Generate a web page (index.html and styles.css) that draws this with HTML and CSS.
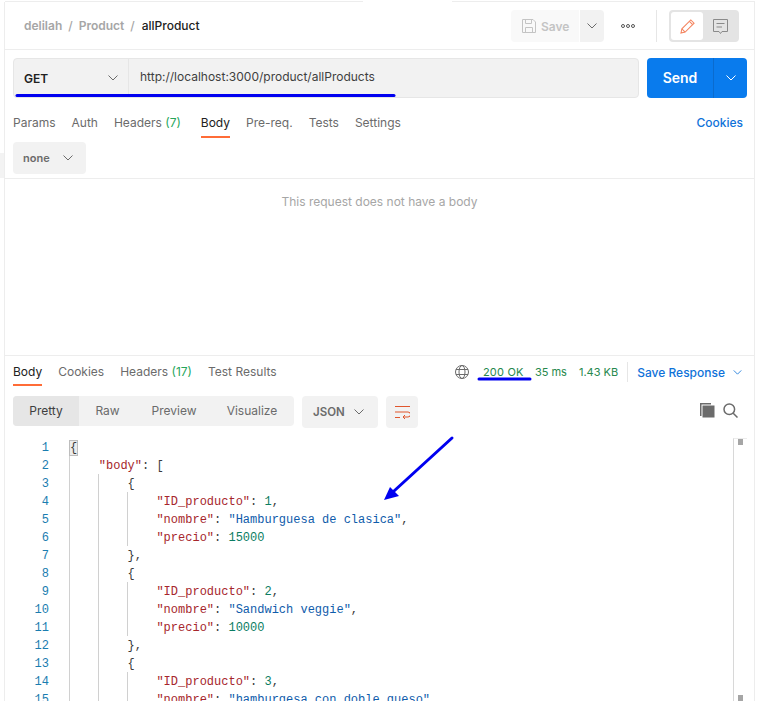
FILE: index.html
```html
<!DOCTYPE html>
<html lang="en">
<head>
<meta charset="utf-8">
<title>allProduct</title>
<link rel="stylesheet" href="styles.css">
</head>
<body>
<div class="stage">
  <div class="topline"><i class="tl-a"></i><i class="tl-b"></i></div>
  <div class="sidepatch"></div>
  <main class="app">
    <header class="head">
      <nav class="crumbs"><span class="dim">delilah</span><span class="sep">/</span><span class="dim">Product</span><span class="sep">/</span><span class="cur">allProduct</span></nav>
      <div class="actions">
        <div class="savegroup">
          <button class="save">
            <svg width="14" height="14" viewBox="0 0 14 14" fill="none" stroke="#c4c4c4" stroke-width="1"><path d="M.5.5h10.500l2.500 2.500v10.500H.5z"/><path d="M3.500.5v4h6v-4M3.500 13.500v-5h7v5"/></svg>
            Save
          </button>
          <button class="savecaret"><svg class="chev" width="10" height="6" viewBox="0 0 10 6"><path d="M.5.5 5 5 9.500.5"/></svg></button>
        </div>
        <div class="dots"><i></i><i></i><i></i></div>
        <div class="vsep"></div>
        <div class="modes">
          <span class="mode on"><svg width="15" height="15" viewBox="0 0 16 16" fill="none" stroke="#f4845f" stroke-width="1.100"><path d="M1 15l1-4.500L11.500 1 15 4.500 5.500 14z"/><path d="M2 10.500 5.500 14M10 2.500 13.500 6"/></svg></span>
          <span class="mode"><svg width="15" height="15" viewBox="0 0 15 15" fill="none" stroke="#8a8a8a" stroke-width="1"><path d="M.5.5h14v12H9l-1.500 2-1.500-2H.5z"/><path d="M3.500 4.500h8M3.500 8h5.500"/></svg></span>
        </div>
      </div>
    </header>

    <section class="reqbar">
      <div class="url">
        <div class="method"><span>GET</span><svg class="chev" width="10" height="6" viewBox="0 0 10 6"><path d="M.5.5 5 5 9.500.5"/></svg></div>
        <div class="address">http://localhost:3000/product/allProducts</div>
      </div>
      <div class="send">
        <span class="sendlabel">Send</span>
        <span class="sendcaret"><svg class="chev white" width="10" height="6" viewBox="0 0 10 6"><path d="M.5.5 5 5 9.500.5"/></svg></span>
      </div>
    </section>

    <nav class="tabs reqtabs">
      <span class="tab">Params</span>
      <span class="tab">Auth</span>
      <span class="tab hdr">Headers <em>(7)</em></span>
      <span class="tab active">Body</span>
      <span class="tab">Pre-req.</span>
      <span class="tab">Tests</span>
      <span class="tab">Settings</span>
      <a class="cookies">Cookies</a>
    </nav>

    <div class="bodytype">
      <div class="drop none"><span>none</span><svg class="chev" width="10" height="6" viewBox="0 0 10 6"><path d="M.5.5 5 5 9.500.5"/></svg></div>
    </div>

    <div class="nobody"><p>This request does not have a body</p></div>

    <section class="response">
      <div class="resphead">
        <nav class="tabs resptabs">
          <span class="tab active">Body</span>
          <span class="tab">Cookies</span>
          <span class="tab">Headers <em>(17)</em></span>
          <span class="tab">Test Results</span>
        </nav>
        <div class="stats">
          <svg class="globe" width="14" height="14" viewBox="0 0 14 14" fill="none" stroke="#6b6b6b" stroke-width="1"><circle cx="7" cy="7" r="6.500"/><ellipse cx="7" cy="7" rx="3" ry="6.500"/><path d="M1 4.500h12M1 9.500h12"/></svg>
          <span class="stat s200">200 OK</span>
          <span class="stat s35">35 ms</span>
          <span class="stat s143">1.43 KB</span>
          <span class="vsep small"></span>
          <span class="saveresp">Save Response</span>
          <svg class="chev blue" width="9" height="5" viewBox="0 0 10 6"><path d="M.5.5 5 5 9.500.5"/></svg>
        </div>
      </div>

      <div class="toolbar">
        <div class="seg">
          <span class="segitem pretty">Pretty</span>
          <span class="segitem raw">Raw</span>
          <span class="segitem preview">Preview</span>
          <span class="segitem visual">Visualize</span>
        </div>
        <div class="drop json"><span>JSON</span><svg class="chev" width="10" height="6" viewBox="0 0 10 6"><path d="M.5.5 5 5 9.500.5"/></svg></div>
        <div class="wrapbtn"><svg width="15" height="13" viewBox="0 0 15 13" fill="none" stroke="#e0562d" stroke-width="1"><path d="M0 .5h15M0 6h13a2 2 0 0 1 0 5H8M10 9l-2 2 2 2M0 11.500h5"/></svg></div>
        <div class="tools">
          <svg width="15" height="15" viewBox="0 0 15 15"><path d="M0 0h11v1.500H1.500V13H0z" fill="#6b6b6b"/><rect x="2.500" y="2.500" width="12" height="12" fill="#6b6b6b"/></svg>
          <svg width="15" height="15" viewBox="0 0 15 15" fill="none" stroke="#6b6b6b" stroke-width="1.500"><circle cx="6.300" cy="6.300" r="5.300"/><path d="M10.200 10.200 14.500 14.500"/></svg>
        </div>
      </div>

      <div class="editor">
        <div class="gutter">
          <div>1</div><div>2</div><div>3</div><div>4</div><div>5</div><div>6</div><div>7</div><div>8</div><div>9</div><div>10</div><div>11</div><div>12</div><div>13</div><div>14</div><div>15</div>
        </div>
        <div class="code">
          <i class="guide g1"></i><i class="guide g2"></i><i class="guide g3a"></i><i class="guide g3b"></i><i class="guide g3c"></i>
          <div class="ln"><span class="brace-hit">{</span></div>
          <div class="ln">    <span class="k">"body"</span>: [</div>
          <div class="ln">        {</div>
          <div class="ln">            <span class="k">"ID_producto"</span>: <span class="n">1</span>,</div>
          <div class="ln">            <span class="k">"nombre"</span>: <span class="s">"Hamburguesa de clasica"</span>,</div>
          <div class="ln">            <span class="k">"precio"</span>: <span class="n">15000</span></div>
          <div class="ln">        },</div>
          <div class="ln">        {</div>
          <div class="ln">            <span class="k">"ID_producto"</span>: <span class="n">2</span>,</div>
          <div class="ln">            <span class="k">"nombre"</span>: <span class="s">"Sandwich veggie"</span>,</div>
          <div class="ln">            <span class="k">"precio"</span>: <span class="n">10000</span></div>
          <div class="ln">        },</div>
          <div class="ln">        {</div>
          <div class="ln">            <span class="k">"ID_producto"</span>: <span class="n">3</span>,</div>
          <div class="ln">            <span class="k">"nombre"</span>: <span class="s">"hamburgesa con doble queso"</span></div>
        </div>
        <div class="scroll"><i></i><i></i></div>
      </div>
    </section>
  </main>

  <svg class="marks" width="763" height="701" viewBox="0 0 763 701" aria-hidden="true">
    <path d="M17 95.500H394" stroke="#0000f0" stroke-width="3" stroke-linecap="round" fill="none"/>
    <path d="M479 379H530" stroke="#0000f0" stroke-width="3" stroke-linecap="round" fill="none"/>
    <path d="M452 438 394 491" stroke="#0000f0" stroke-width="3" stroke-linecap="round" fill="none"/>
    <path d="M384 500 390 487 399 496z" fill="#0000f0"/>
  </svg>
</div>
</body>
</html>
```
FILE: styles.css
```css
* { box-sizing: border-box; }
html, body { margin: 0; padding: 0; background: #fff; }
body { font-family: Inter, "Liberation Sans", sans-serif; font-size: 12px; color: #6b6b6b; }
button { font: inherit; border: 0; padding: 0; background: none; }
em { font-style: normal; }

.stage { position: relative; width: 763px; height: 701px; overflow: hidden; }
.topline { height: 2px; display: flex; justify-content: space-between; padding-left: 5px; width: 755px; }
.topline i { display: block; height: 2px; border-bottom: 1px solid #ededed; }
.tl-a { width: 358px; }
.tl-b { width: 303px; }
.sidepatch { position: absolute; left: 0; top: 153px; width: 4px; height: 25px; background: #f3f3f3; }
.app { margin-left: 4px; width: 751px; height: 699px; border-left: 1px solid #ededed; border-right: 1px solid #ededed; display: flex; flex-direction: column; }

.chev { fill: none; stroke: #6b6b6b; stroke-width: 1; display: block; }
.chev.white { stroke: #fff; }
.chev.blue { stroke: #0f72d9; }

/* Header */
.head { height: 48px; flex: none; border-bottom: 1px solid #ededed; padding: 8px 15px 0 19px; display: flex; justify-content: space-between; align-items: flex-start; }
.crumbs { display: flex; align-items: center; height: 30px; font-size: 12px; font-weight: 600; }
.crumbs .dim { color: #a6a6a6; }
.crumbs .sep { color: #a6a6a6; margin: 0 6px; font-weight: 500; }
.crumbs .cur { color: #212121; font-weight: 500; margin-left: 1px; }
.actions { display: flex; align-items: center; height: 32px; }
.savegroup { display: flex; height: 32px; margin-right: 17px; }
.save { width: 68px; height: 32px; background: #f9f9f9; border-radius: 4px 0 0 4px; color: #c4c4c4; font-size: 12px; font-weight: 600; display: flex; align-items: center; gap: 5px; padding-left: 11px; margin-right: 1px; }
.savecaret { width: 24px; height: 32px; background: #f2f2f2; border-radius: 0 4px 4px 0; display: flex; align-items: center; justify-content: center; }
.dots { display: flex; gap: 1px; width: 14px; margin-right: 21px; }
.dots i { width: 4px; height: 4px; border: 1px solid #555; border-radius: 50%; display: block; flex: none; }
.vsep { width: 1px; height: 32px; background: #e6e6e6; margin-right: 12px; }
.modes { width: 70px; height: 32px; background: #e4e4e4; border-radius: 4px; padding: 2px; display: flex; }
.mode { width: 32px; height: 28px; display: flex; align-items: center; justify-content: center; border-radius: 3px; }
.mode:not(.on) { width: 34px; }
.mode.on { background: #fff; }

/* Request bar */
.reqbar { flex: none; height: 40px; margin: 8px 7px 0 8px; display: flex; justify-content: space-between; }
.url { width: 626px; height: 40px; background: #f2f2f2; border: 1px solid #e6e6e6; border-radius: 4px; display: flex; }
.method { width: 115px; flex: none; border-right: 1px solid #e6e6e6; display: flex; align-items: center; justify-content: space-between; padding: 0 10px; font-size: 12px; font-weight: 600; color: #212121; }
.address { padding: 0 11px; line-height: 36px; font-size: 12px; color: #3f3f3f; }
.send { width: 100px; height: 40px; background: #097bed; border-radius: 4px; display: flex; color: #fff; font-weight: 600; }
.sendlabel { width: 67px; text-align: center; line-height: 40px; font-size: 14px; border-right: 1px solid #0a6bce; }
.sendcaret { flex: 1; display: flex; align-items: center; justify-content: center; }

/* Tabs */
.tabs { display: flex; }
.tab { display: block; font-size: 12px; line-height: 26px; height: 28px; color: #6b6b6b; position: relative; }
.tab em { color: #26a65b; }
.tab.active { color: #212121; }
.tab.active::after { content: ""; position: absolute; left: 0; right: 0; bottom: 0; height: 2px; background: #ff6c37; }
.reqtabs { flex: none; margin: 12px 11px 0 8px; gap: 16px; height: 28px; }
.hdr { margin-right: 4px; }
.cookies { margin-left: auto; color: #0f72d9; font-size: 12px; font-weight: 500; line-height: 26px; }

.drop { background: #f2f2f2; border-radius: 4px; height: 32px; display: flex; align-items: center; justify-content: space-between; font-size: 11px; font-weight: 600; color: #6b6b6b; }
.bodytype { flex: none; height: 41px; padding: 4px 0 0 8px; border-bottom: 1px solid #ededed; }
.drop.none { width: 73px; padding: 0 13px 0 10px; }

.nobody { flex: none; height: 177px; border-bottom: 1px solid #ededed; }
.nobody p { margin: 0; padding-top: 15px; line-height: 16px; text-align: center; color: #a6a6a6; font-size: 12px; }

/* Response */
.response { flex: 1; min-height: 0; display: flex; flex-direction: column; }
.resphead { flex: none; height: 31px; padding: 2px 12px 0 8px; display: flex; justify-content: space-between; }
.resptabs { gap: 16px; }
.resptabs .tab { line-height: 28px; }
.stats { display: flex; align-items: center; height: 28px; color: #26884d; font-size: 11px; }
.globe { margin-right: 10px; }
.stat { display: block; }
.s200 { margin-right: 11px; padding-left: 4px; width: 45px; letter-spacing: .02em; white-space: nowrap; }
.s35 { margin-right: 12px; }
.s143 { margin-right: 9px; }
.vsep.small { height: 20px; margin-right: 9px; display: block; }
.saveresp { color: #0f72d9; font-size: 12px; font-weight: 500; margin-right: 8px; }

.toolbar { flex: none; height: 32px; margin-top: 9px; padding: 0 8px; display: flex; }
.seg { width: 281px; height: 30px; background: #f2f2f2; border-radius: 4px; display: flex; margin-right: 8px; overflow: hidden; font-size: 12px; line-height: 30px; }
.segitem { display: block; text-align: center; }
.pretty { width: 66px; background: #e6e6e6; color: #3f3f3f; }
.raw { width: 57px; }
.preview { width: 72px; margin-left: 2px; }
.visual { width: 84px; }
.drop.json { width: 76px; padding: 0 14px 0 11px; margin-right: 8px; font-size: 11.500px; }
.wrapbtn { width: 32px; height: 32px; background: #f2f2f2; border-radius: 4px; display: flex; align-items: center; justify-content: center; }
.tools { margin-left: auto; display: flex; gap: 8px; padding: 7px 8px 0 0; height: 32px; }

/* Editor */
.editor { flex: 1; min-height: 0; margin-top: 10px; display: flex; overflow: hidden; font-family: "Liberation Mono", monospace; font-size: 12px; line-height: 18px; }
.gutter { width: 44px; flex: none; padding-top: 1px; text-align: right; color: #1a7db0; }
.code { position: relative; width: 664px; flex: none; margin-left: 20px; padding: 1px 0 0 1px; color: #3a3a3a; }
.ln { height: 18px; white-space: pre; }
.k { color: #a6262b; }
.s { color: #0f5cab; }
.n { color: #0b7d62; }
.brace-hit { background: #ececec; outline: 1px solid #bdbdbd; }
.guide { position: absolute; width: 1px; background: #d0d0d0; display: block; }
.g1 { left: 0; top: 18px; bottom: 0; }
.g2 { left: 29px; top: 36px; bottom: 0; }
.g3a { left: 58px; top: 54px; height: 54px; }
.g3b { left: 58px; top: 144px; height: 54px; }
.g3c { left: 58px; top: 234px; height: 54px; }
.scroll { width: 14px; border-left: 1px solid #d8d8d8; border-top: 1px solid #ececec; position: relative; flex: none; }
.scroll i { position: absolute; left: 4px; width: 5px; height: 6px; background: #a6a6a6; display: block; }
.scroll i:first-child { top: 0; }
.scroll i:last-child { bottom: 0; }

/* Screenshot annotations drawn over the interface */
.marks { position: absolute; left: 0; top: 0; pointer-events: none; }
```
